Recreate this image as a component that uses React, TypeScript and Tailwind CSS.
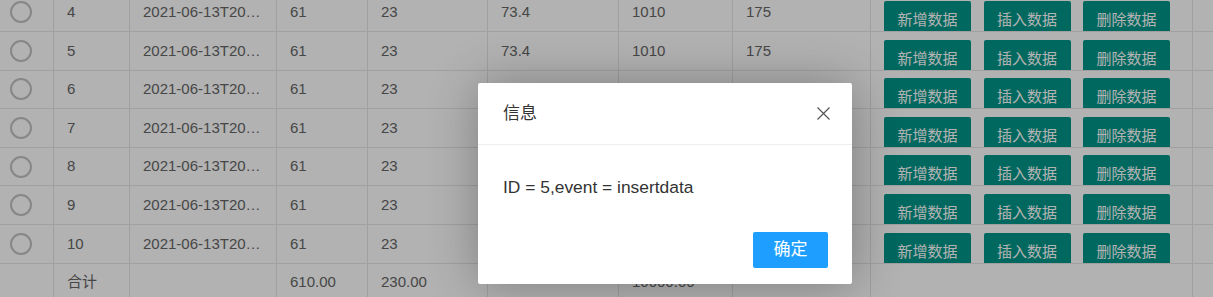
import React from 'react';

interface Row {
  id: number;
  time: string;
  a: string;
  b: string;
  c: string;
  d: string;
  e: string;
}

// rows 6+ sit under the dialog in the middle columns, so they are left blank there
const rows: Row[] = [4, 5, 6, 7, 8, 9, 10].map((id) => ({
  id,
  time: '2021-06-13T20…',
  a: '61',
  b: '23',
  c: id < 6 ? '73.4' : '',
  d: id < 6 ? '1010' : '',
  e: id < 6 ? '175' : '',
}));

const gridCols = 'grid grid-cols-[54px_76px_147px_91px_120px_131px_114px_138px_322px_1fr]';
const cell = 'border-r border-[#e6e6e6] px-[13px] flex items-center overflow-hidden whitespace-nowrap';

const ActionButton: React.FC<{ label: string }> = ({ label }) => (
  <button className="w-[87px] h-[38px] shrink-0 leading-[38px] text-center text-[15px] text-white bg-[#009688] rounded-[2px]">
    {label}
  </button>
);

export default function App() {
  return (
    <div className="relative w-[1213px] h-[297px] overflow-hidden bg-white font-['Liberation_Sans','Noto_Sans_CJK_SC',sans-serif] text-[15px] text-[#666]">
      <div className="-mt-[6.6px]">
        {rows.map((r) => (
          <div key={r.id} className={`${gridCols} h-[38.6px] border-b border-[#e6e6e6]`}>
            <div className="border-r border-[#e6e6e6] pl-[10px] flex items-center">
              <span className="w-[22px] h-[22px] rounded-full border-2 border-[#c2c2c2]" />
            </div>
            <div className={cell}>{r.id}</div>
            <div className={cell}>{r.time}</div>
            <div className={cell}>{r.a}</div>
            <div className={cell}>{r.b}</div>
            <div className={cell}>{r.c}</div>
            <div className={cell}>{r.d}</div>
            <div className={cell}>{r.e}</div>
            <div className="border-r border-[#e6e6e6] pl-[13px] pt-[7.7px] flex gap-[12.5px] overflow-hidden">
              <ActionButton label="新增数据" />
              <ActionButton label="插入数据" />
              <ActionButton label="删除数据" />
            </div>
            <div />
          </div>
        ))}
        <div className={`${gridCols} h-[38.6px] border-b border-[#e6e6e6]`}>
          <div className="border-r border-[#e6e6e6]" />
          <div className={cell}>合计</div>
          <div className={cell} />
          <div className={cell}>610.00</div>
          <div className={cell}>230.00</div>
          <div className={cell} />
          <div className={cell}>10000.00</div>
          <div className={cell} />
          <div className="border-r border-[#e6e6e6]" />
          <div />
        </div>
      </div>

      {/* modal shade */}
      <div className="absolute inset-0 bg-black/30" />

      {/* dialog */}
      <div className="absolute left-[478px] top-[83px] w-[374px] h-[201px] bg-white rounded-[2px] shadow-[1px_1px_50px_rgba(0,0,0,0.3)] flex flex-col">
        <div className="h-[62px] shrink-0 border-b border-[#eee] pl-[25px] pr-[22px] flex items-center justify-between">
          <span className="text-[17px] text-[#333] mt-[1px]">信息</span>
          <svg width="13" height="13" viewBox="0 0 13 13">
            <path d="M0.5 0.5 L12.5 12.5 M12.5 0.5 L0.5 12.5" stroke="#555" strokeWidth="1.2" fill="none" />
          </svg>
        </div>
        <div className="px-[25px] pt-[29px] pb-[25px] text-[17.4px] leading-[26px] text-[#333]">
          ID = 5,event = insertdata
        </div>
        <div className="flex justify-end pr-[24px] pt-[7px]">
          <button className="w-[75px] h-[36px] rounded-[2px] bg-[#1e9fff] text-white text-[17px]">确定</button>
        </div>
      </div>
    </div>
  );
}
